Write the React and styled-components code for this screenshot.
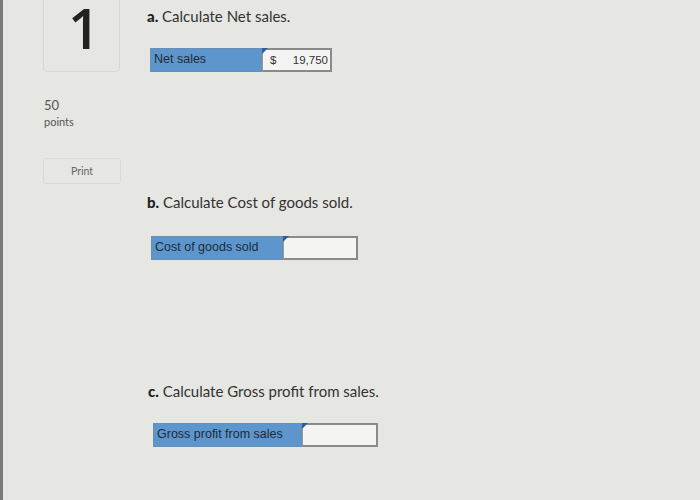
import React from 'react';
import styled, { createGlobalStyle } from 'styled-components';

const GlobalStyle = createGlobalStyle`
  html, body {
    margin: 0;
    padding: 0;
    background: #e6e6e3;
  }
  * { box-sizing: border-box; }
`;

const Page = styled.div`
  display: flex;
  width: 700px;
  height: 500px;
  overflow: hidden;
  background: #e6e6e3;
  border-left: 3px solid #7a7a78;
  font-family: "Liberation Sans", Arial, sans-serif;
`;

const Sidebar = styled.aside`
  width: 124px;
  flex-shrink: 0;
  padding-left: 40px;
  display: flex;
  flex-direction: column;
`;

const NumberBox = styled.div`
  width: 77px;
  height: 72px;
  border: 1px solid #d6d6d3;
  border-top: none;
  border-radius: 0 0 5px 5px;
  display: flex;
  justify-content: flex-end;
  padding-right: 19px;
  font-family: "Open Sans", "Liberation Sans", sans-serif;
  font-weight: 600;
  font-size: 56px;
  line-height: 54px;
  color: #222;
`;

const Points = styled.div`
  margin-top: 25px;
  color: #555;
  font-family: "Lato", sans-serif;
  padding-left: 1px;
`;

const PointsValue = styled.div`
  font-size: 13px;
  line-height: 17px;
`;

const PointsLabel = styled.div`
  font-size: 11px;
  line-height: 15px;
`;

const PrintButton = styled.button`
  margin-top: 29px;
  width: 78px;
  height: 26px;
  padding: 0;
  background: transparent;
  border: 1px solid #d9d9d6;
  border-radius: 3px;
  font-family: "Lato", sans-serif;
  font-size: 10.5px;
  color: #666;
`;

const Content = styled.main`
  flex: 1;
  padding-left: 20px;
  padding-top: 7px;
  display: flex;
  flex-direction: column;
`;

const Part = styled.section`
  margin-top: ${({ $gap }) => $gap}px;
  margin-left: ${({ $indent }) => $indent}px;
`;

const Heading = styled.h2`
  margin: 0;
  font-family: "Lato", sans-serif;
  font-weight: 400;
  font-size: 15px;
  line-height: 18px;
  color: #333;

  b {
    font-weight: 900;
    color: #222;
  }
`;

const Row = styled.div`
  display: flex;
  height: 24px;
  margin-top: ${({ $gap }) => $gap}px;
  margin-left: ${({ $indent }) => $indent}px;
`;

const Label = styled.div`
  width: ${({ $width }) => $width}px;
  background: #5d96cd;
  border: 1px solid #6b8fb3;
  padding-left: 3px;
  font-size: 12.5px;
  line-height: 21px;
  color: #1d2b3a;
`;

const Cell = styled.div`
  position: relative;
  width: ${({ $width }) => $width}px;
  background: #f4f4f2;
  border: 2px solid #8a8a88;
  border-left: 1px solid #9a9a98;
  display: flex;
  align-items: center;
  justify-content: space-between;
  padding: 0 2px 0 7px;
  font-size: 11.5px;
  color: #333;

  &::before {
    content: '';
    position: absolute;
    left: -1px;
    top: -2px;
    border-top: 6px solid #2f5f9a;
    border-right: 6px solid transparent;
  }
`;

function AnswerRow({ label, labelWidth, cellWidth, gap, indent, value }) {
  return (
    <Row $gap={gap} $indent={indent}>
      <Label $width={labelWidth}>{label}</Label>
      <Cell $width={cellWidth}>
        {value && (
          <>
            <span>$</span>
            <span>{value}</span>
          </>
        )}
      </Cell>
    </Row>
  );
}

export default function App() {
  return (
    <>
      <GlobalStyle />
      <Page>
        <Sidebar>
          <NumberBox>1</NumberBox>
          <Points>
            <PointsValue>50</PointsValue>
            <PointsLabel>points</PointsLabel>
          </Points>
          <PrintButton>Print</PrintButton>
        </Sidebar>
        <Content>
          <Part $gap={0} $indent={0}>
            <Heading><b>a.</b> Calculate Net sales.</Heading>
            <AnswerRow label="Net sales" labelWidth={112} cellWidth={70} gap={23} indent={3} value="19,750" />
          </Part>
          <Part $gap={121} $indent={0}>
            <Heading><b>b.</b> Calculate Cost of goods sold.</Heading>
            <AnswerRow label="Cost of goods sold" labelWidth={132} cellWidth={75} gap={25} indent={4} />
          </Part>
          <Part $gap={122} $indent={1}>
            <Heading><b>c.</b> Calculate Gross profit from sales.</Heading>
            <AnswerRow label="Gross profit from sales" labelWidth={149} cellWidth={76} gap={23} indent={5} />
          </Part>
        </Content>
      </Page>
    </>
  );
}
